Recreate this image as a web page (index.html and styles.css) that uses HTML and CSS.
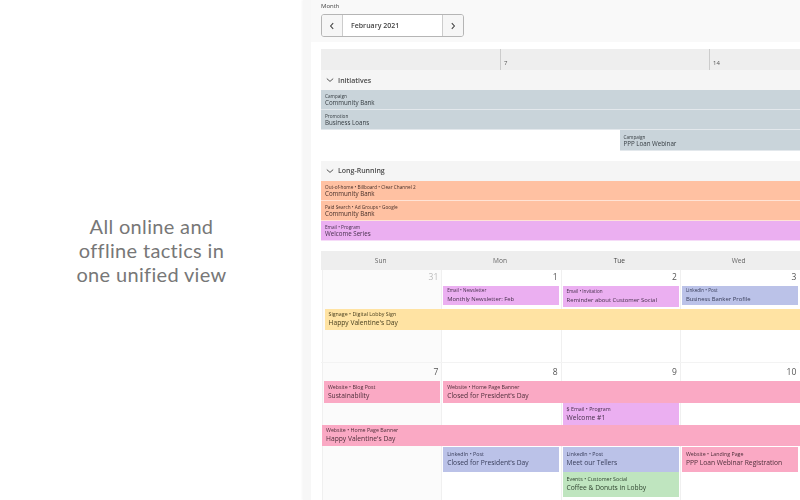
FILE: index.html
```html
<!DOCTYPE html>
<html lang="en">
<head>
<meta charset="utf-8">
<title>Marketing calendar</title>
<link rel="stylesheet" href="styles.css">
</head>
<body>
<main class="page">
  <section class="intro"><p>All online and<br>offline tactics in<br>one unified view</p></section>
  <section class="panel">
    <header class="toolbar">
      <div class="field-label">Month</div>
      <div class="stepper">
        <button class="step"><svg viewBox="0 0 8 8" class="step-icon"><path d="M5.2 1.2 2.6 4l2.6 2.8"/></svg></button>
        <div class="month">February 2021</div>
        <button class="step step-next"><svg viewBox="0 0 8 8" class="step-icon"><path d="M2.8 1.2 5.4 4 2.8 6.8"/></svg></button>
      </div>
    </header>
    <div class="content">
      <div class="ruler">
        <div class="tick tick-start"></div>
        <div class="tick tick-week"><span class="soft">7</span></div>
        <div class="tick tick-last"><span class="soft">14</span></div>
      </div>
      <div class="group"><svg viewBox="0 0 8 8" class="chev"><path d="M.8 2.6 4 5.4l3.2-2.8"/></svg><span class="soft">Initiatives</span></div>
      <div class="bar slate"><span class="meta">Campaign</span><span class="name">Community Bank</span></div>
      <div class="bar slate"><span class="meta">Promotion</span><span class="name">Business Loans</span></div>
      <div class="bar slate bar-late"><span class="meta">Campaign</span><span class="name">PPP Loan Webinar</span></div>
      <div class="group group-gap"><svg viewBox="0 0 8 8" class="chev"><path d="M.8 2.6 4 5.4l3.2-2.8"/></svg><span class="soft">Long-Running</span></div>
      <div class="bar peach"><span class="meta">Out-of-home • Billboard • Clear Channel 2</span><span class="name">Community Bank</span></div>
      <div class="bar peach"><span class="meta">Paid Search • Ad Groups • Google</span><span class="name">Community Bank</span></div>
      <div class="bar violet"><span class="meta">Email • Program</span><span class="name">Welcome Series</span></div>

      <div class="weekdays"><div class="soft">Sun</div><div class="soft">Mon</div><div class="soft strong">Tue</div><div class="soft">Wed</div></div>

      <div class="week week-one">
        <div class="day off col1"><span class="num muted">31</span></div>
        <div class="day col2"><span class="num">1</span></div>
        <div class="day col3"><span class="num">2</span></div>
        <div class="day col4"><span class="num">3</span></div>
        <div class="ev ev-small violet col2 r2"><span class="meta">Email • Newsletter</span><span class="title">Monthly Newsletter: Feb</span></div>
        <div class="ev ev-small ev-tall violet col3 r2"><span class="meta">Email • Invitation</span><span class="title">Reminder about Customer Social</span></div>
        <div class="ev ev-small blue col4 r2"><span class="meta">LinkedIn • Post</span><span class="title">Business Banker Profile</span></div>
        <div class="ev yellow span-all r3"><span class="meta">Signage • Digital Lobby Sign</span><span class="title">Happy Valentine's Day</span></div>
      </div>

      <div class="week week-two">
        <div class="day off col1"><span class="num">7</span></div>
        <div class="day col2"><span class="num">8</span></div>
        <div class="day col3"><span class="num">9</span></div>
        <div class="day col4"><span class="num">10</span></div>
        <div class="ev pink col1 r2"><span class="meta">Website • Blog Post</span><span class="title">Sustainability</span></div>
        <div class="ev pink span-rest r2"><span class="meta">Website • Home Page Banner</span><span class="title">Closed for President's Day</span></div>
        <div class="ev violet col3 r3"><span class="meta">$ Email • Program</span><span class="title">Welcome #1</span></div>
        <div class="ev pink full r4"><span class="meta">Website • Home Page Banner</span><span class="title">Happy Valentine's Day</span></div>
        <div class="ev blue col2 r5"><span class="meta">LinkedIn • Post</span><span class="title">Closed for President's Day</span></div>
        <div class="ev blue col3 r5"><span class="meta">LinkedIn • Post</span><span class="title">Meet our Tellers</span></div>
        <div class="ev pink col4 r5"><span class="meta">Website • Landing Page</span><span class="title">PPP Loan Webinar Registration</span></div>
        <div class="ev green col3 r6"><span class="meta">Events • Customer Social</span><span class="title">Coffee &amp; Donuts in Lobby</span></div>
      </div>
    </div>
  </section>
</main>
</body>
</html>
```

FILE: styles.css
```css
* { box-sizing: border-box; }
html, body { margin: 0; height: 100%; overflow: hidden; background: #fff; }
body { font-family: "Open Sans", "Lato", sans-serif; color: #444; }
.page { display: flex; width: 800px; height: 500px; overflow: hidden; }

.intro { flex: 0 0 303px; display: flex; align-items: center; justify-content: center; }
.intro p { margin: 0; font-family: "Lato", sans-serif; text-align: center; font-size: 20px; line-height: 24px; color: #777; letter-spacing: .33px; }

.panel { flex: 0 0 497px; height: 500px; overflow: hidden; background: #f7f7f7; padding-left: 8px; box-shadow: -1px 0 2px rgba(0,0,0,.04); }

.meta, .name, .title, .num, .soft, .field-label, .month { filter: blur(.25px); }

.toolbar { height: 42px; background: #f9f9f9; padding: 2px 0 0 10px; }
.field-label { font-size: 6px; line-height: 8px; color: #444; }
.stepper { display: flex; width: 143px; height: 23px; margin-top: 4px; border: 1px solid #b5b5b5; border-radius: 3px; background: #fff; overflow: hidden; }
.step { flex: 0 0 21px; padding: 0; border: 0; border-right: 1px solid #ccc; background: #f6f6f6; display: flex; align-items: center; justify-content: center; }
.step-next { border-right: 0; border-left: 1px solid #ccc; }
.step-icon { width: 8px; height: 8px; fill: none; stroke: #444; stroke-width: 1.1; }
.month { flex: 1; padding-left: 8px; font-size: 7px; line-height: 21px; font-weight: 600; color: #444; }

.content { background: #fff; height: 458px; padding: 7px 0 0 10px; }
.ruler { display: flex; height: 21px; background: #eee; font-size: 6px; color: #555; }
.tick { padding: 10px 0 0 3px; line-height: 9px; }
.tick-start { flex: 0 0 179px; }
.tick-week { flex: 0 0 209px; border-left: 1px solid #ccc; }
.tick-last { flex: 1; border-left: 1px solid #ccc; }

.group { display: flex; align-items: center; height: 20.3px; background: #f5f5f5; padding-left: 5px; font-size: 7px; font-weight: 600; color: #4a4a4a; }
.group-gap { margin-top: 10px; }
.chev { width: 8px; height: 8px; margin-right: 4px; fill: none; stroke: #555; stroke-width: 1; }

.bar { display: flex; flex-direction: column; justify-content: center; height: 20.1px; padding: 1px 4px 0; border-bottom: 1px solid #e3e8ec; }
.bar-late { margin-left: 298.5px; }
.meta { font-size: 4.7px; line-height: 6px; white-space: nowrap; }
.name { font-size: 6.2px; line-height: 8px; white-space: nowrap; }
.slate { background: #c9d4da; color: #353c41; }
.peach { background: #ffc1a2; color: #46302a; border-bottom-color: #ffe3d6; }
.violet { background: #ebaff1; color: #452f4b; border-bottom-color: #f6dcf8; }

.weekdays { display: grid; grid-template-columns: repeat(4, 119.33px); height: 19.5px; margin-top: 9.8px; background: #eee; font-size: 6.6px; line-height: 19px; text-align: center; color: #666; }
.strong { color: #444; }

.week { display: grid; grid-template-columns: repeat(4, 119.33px); width: 478px; padding-left: 1px; border-bottom: 1px solid #f3f3f3; }
.week-one { grid-template-rows: 15.5px 22px 23px 31.5px; }
.week-two { grid-template-rows: 18px 22px 22px 22px 25px 25px 4px; }
.day { grid-row: 1 / -1; border-left: 1px solid #f0f0f0; text-align: right; padding: 0 3px 0 0; background: #fff; }
.day.off { background: #fbfbfb; }
.num { display: block; font-size: 8.5px; line-height: 13px; color: #555; }
.muted { color: #bbb; }
.week-two .num { line-height: 17px; }
.col1 { grid-column: 1; }
.col2 { grid-column: 2; }
.col3 { grid-column: 3; }
.col4 { grid-column: 4; }
.r2 { grid-row: 2; }
.r3 { grid-row: 3; }
.r4 { grid-row: 4; }
.r5 { grid-row: 5; }
.r6 { grid-row: 6; }

.ev { display: flex; flex-direction: column; justify-content: center; margin: 0 1.2px .6px 1.9px; padding: 0 4px; min-width: 0; overflow: hidden; }
.ev .meta { font-size: 5.3px; line-height: 7px; }
.title { font-size: 6.7px; line-height: 10px; white-space: nowrap; }
.ev-small { margin-bottom: 3px; }
.ev-small .meta { font-size: 4.6px; }
.ev-small .title { font-size: 5.9px; }
.ev-tall { margin-bottom: 1px; padding-top: 1px; }
.yellow.span-all { margin-top: 1px; }
.span-all { grid-column: 1 / -1; margin-right: -40px; margin-left: 2.5px; }
.span-rest { grid-column: 2 / -1; margin-right: -40px; }
.full { grid-column: 1 / -1; margin: 0 -40px 1px 0; }
.blue { background: #bbc2e8; color: #373c58; }
.yellow { background: #ffe3a3; color: #4a4020; }
.pink { background: #faa9c4; color: #4e2f3a; }
.green { background: #bfe5bf; color: #304430; }
.week .violet { background: #ebaff1; }
```
